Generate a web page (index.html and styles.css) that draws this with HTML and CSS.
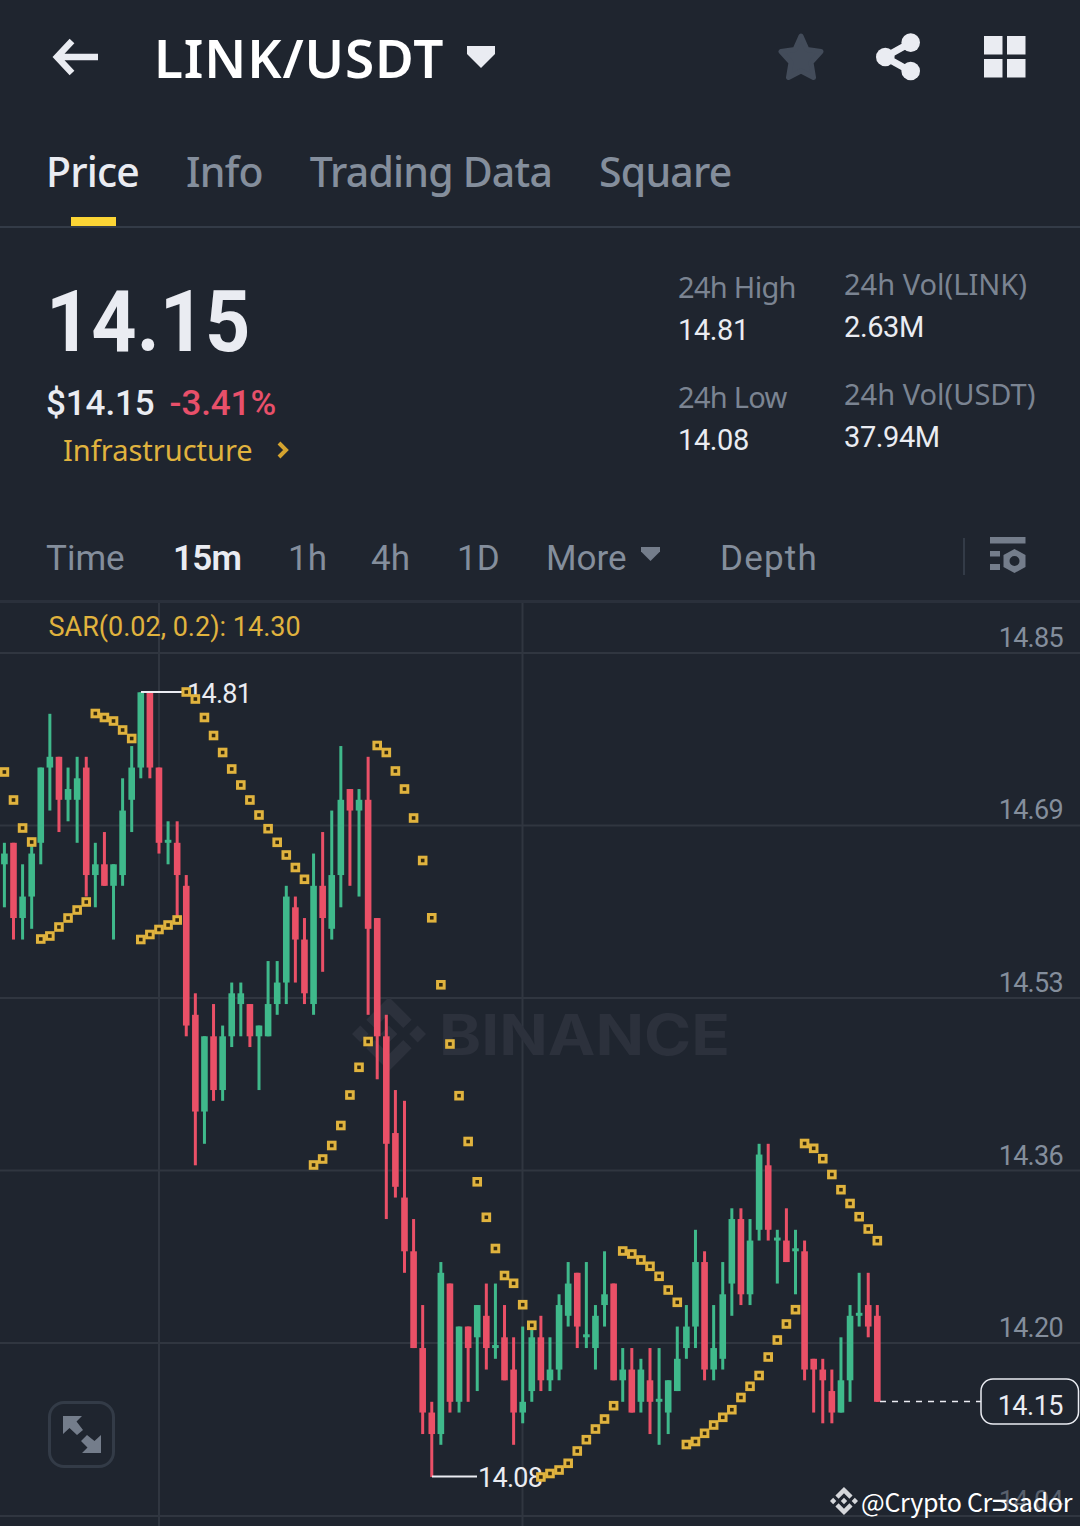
FILE: index.html
```html
<!DOCTYPE html>
<html lang="en">

<head>
    <meta charset="UTF-8">
    <meta name="viewport" content="width=device-width, initial-scale=1.0">
    <title>LINK/USDT</title>
    <link rel="stylesheet" href="styles.css">
</head>

<body>
    <header class="header">
        <svg class="back" width="46" height="38" viewBox="0 0 46 38">
            <path d="M20 3L5 19L20 35M5 19H46" />
        </svg>
        <h1 class="pair">LINK/USDT</h1>
        <svg class="pair-caret" width="28" height="22" viewBox="0 0 28 22">
            <path d="M0 0H28V8L14 22L0 8Z" />
        </svg>
        <div class="actions">
            <svg class="star" width="46" height="48" viewBox="0 0 46 48">
                <path d="M23 3L29 16.500L43 18.500L33 29.500L35.500 44.500L23 38L10.500 44.500L13 29.500L3 18.500L17 16.500Z" />
            </svg>
            <svg class="share" width="44" height="48" viewBox="0 0 44 48">
                <path d="M35 9.500L9 24L35 38.500" />
                <circle cx="9.300" cy="24" r="9.300" />
                <circle cx="34.700" cy="9.600" r="9.300" />
                <circle cx="34.700" cy="38" r="9.300" />
            </svg>
            <svg class="grid-icon" width="42" height="42" viewBox="0 0 42 42">
                <path d="M0 0H18.500V18.500H0ZM23 0H41.500V18.500H23ZM0 23H18.500V41.500H0ZM23 23H41.500V41.500H23Z" />
            </svg>
        </div>
    </header>

    <nav class="tabs">
        <a class="tab active">Price</a>
        <a class="tab">Info</a>
        <a class="tab">Trading Data</a>
        <a class="tab">Square</a>
    </nav>

    <section class="ticker">
        <div class="price-box">
            <div class="price">14.15</div>
            <div class="sub-price">
                <span>$14.15</span>
                <span class="change">-3.41%</span>
            </div>
            <div class="category">
                <span>Infrastructure</span>
                <svg width="12" height="18" viewBox="0 0 12 18">
                    <path d="M2 2L9 9L2 16" />
                </svg>
            </div>
        </div>
        <div class="stats">
            <div class="stat-col range">
                <div class="label">24h High</div>
                <div class="value">14.81</div>
                <div class="label">24h Low</div>
                <div class="value">14.08</div>
            </div>
            <div class="stat-col volume">
                <div class="label">24h Vol(LINK)</div>
                <div class="value">2.63M</div>
                <div class="label">24h Vol(USDT)</div>
                <div class="value">37.94M</div>
            </div>
        </div>
    </section>

    <div class="intervals">
        <span class="time">Time</span>
        <span class="m15 selected">15m</span>
        <span class="h1">1h</span>
        <span class="h4">4h</span>
        <span class="d1">1D</span>
        <span class="more">More</span>
        <svg class="more-caret" width="19" height="14" viewBox="0 0 19 14">
            <path d="M0 0H19V4.500L9.500 14L0 4.500Z" />
        </svg>
        <span class="depth">Depth</span>
        <svg class="settings" width="36" height="36" viewBox="0 0 36 36">
            <path fill-rule="evenodd" d="M0 0H35.500V6.500H0ZM0 14H10V19.500H0ZM0 27H10V33H0ZM24.500 12L35.500 18V30L24.500 36L13.500 30V18ZM24.500 19A5 5 0 1 0 24.500 29A5 5 0 1 0 24.500 19Z" />
        </svg>
    </div>

    <main class="chart">
        <svg id="chart" width="1080" height="926" viewBox="0 600 1080 926">
            <defs>
                <symbol id="logo" viewBox="0 0 24 24">
                    <path d="M16.624 13.9202l2.7175 2.7154-7.353 7.353-7.353-7.352 2.7175-2.7164 4.6355 4.6595 4.6356-4.6595zm4.6366-4.6366L24 12l-2.7154 2.7164L18.5682 12l2.6924-2.7164zm-9.272.001l2.7163 2.6914-2.7164 2.7174v-.001L9.2721 12l2.7164-2.7154zm-9.2722-.001L5.4088 12l-2.6914 2.6924L0 12l2.7164-2.7164zM11.9885.0115l7.353 7.329-2.7174 2.7154-4.6356-4.6356-4.6355 4.6595-2.7174-2.7154 7.353-7.353z" />
                </symbol>
            </defs>
            <path class="top-line" d="M0 601.500H1080" />
            <path class="lines" d="M0 653H1080M0 825.500H1080M0 998H1080M0 1170.500H1080M0 1343H1080M0 1516H1080M159 603V1526M522.500 603V1526" />
            <g class="watermark">
                <use href="#logo" x="352" y="997" width="74" height="74" />
                <text x="439" y="1055" textLength="291" lengthAdjust="spacingAndGlyphs">BINANCE</text>
            </g>
            <g class="axis">
                <text x="1063" y="647">14.85</text>
                <text x="1063" y="819">14.69</text>
                <text x="1063" y="992">14.53</text>
                <text x="1063" y="1165">14.36</text>
                <text x="1063" y="1337">14.20</text>
                <text class="faded" x="1063" y="1510">14.04</text>
            </g>
            <text class="sar-label" x="48.500" y="636">SAR(0.02, 0.2): 14.30</text>
            <g id="candles"></g>
            <path class="pointer" d="M141 692H188M432 1476.500H477" />
            <text class="extreme" x="187" y="703">14.81</text>
            <text class="extreme" x="478" y="1487">14.08</text>
            <g id="sar"></g>
            <path class="last-line" d="M880 1401.500H981" />
            <rect class="last-box" x="981" y="1379" width="97.500" height="45" rx="12" />
            <text class="last-text" x="1063" y="1415">14.15</text>
        </svg>
        <button type="button" class="fullscreen">
            <svg width="40" height="40" viewBox="0 0 40 40">
                <path d="M1 1H20L14.500 6.500L21 15L15 20L7.500 13L1 19ZM39 38H20L25.500 32.500L19 26L25 20L32.500 26L39 20Z" />
            </svg>
        </button>
        <div class="credit">
            <svg width="28" height="28"><use href="#logo" /></svg>
            <span>@Crypto Crᴝsador</span>
        </div>
    </main>
    <script src="chart.js"></script>
</body>

</html>
```
FILE: styles.css
```css
* {
    box-sizing: border-box;
}

body {
    margin: 0;
    width: 1080px;
    height: 1526px;
    overflow: hidden;
    background-color: #1f252f;
    color: #eaecf2;
    font-family: "Noto Sans", sans-serif;
}

svg {
    display: block;
    flex: none;
}

.header {
    display: flex;
    align-items: center;
    height: 113px;
    padding: 0 54px 0 52px;
}

.back {
    fill: none;
    stroke: #eaecf2;
    stroke-width: 6.5;
}

.pair {
    margin: 3px 0 0 56px;
    width: 292px;
    font-size: 53px;
    font-weight: 600;
    line-height: 60px;
    letter-spacing: 0.9px;
    color: white;
    white-space: nowrap;
}

.pair-caret {
    margin-left: 21px;
    fill: #eaecf2;
}

.actions {
    display: flex;
    align-items: center;
    margin-left: auto;
}

.star {
    fill: #434c5a;
    stroke: #434c5a;
    stroke-width: 5;
    stroke-linejoin: round;
}

.share {
    margin-left: 52px;
    fill: #eaecf2;
}

.share path {
    fill: none;
    stroke: #eaecf2;
    stroke-width: 7;
}

.grid-icon {
    margin-left: 64px;
    fill: #eaecf2;
}

.tabs {
    display: flex;
    gap: 47px;
    height: 115px;
    padding: 28px 46px 0;
    border-bottom: 2px solid #333b47;
    font-size: 41px;
    font-weight: 500;
    line-height: 60px;
    color: #848e9c;
}

.tab {
    position: relative;
    letter-spacing: -0.8px;
}

.active {
    color: #eaecf2;
}

.active::after {
    content: "";
    position: absolute;
    left: 25px;
    bottom: 0;
    width: 45px;
    height: 9px;
    background-color: #fcd535;
}

.ticker {
    display: flex;
    justify-content: space-between;
    height: 290px;
    padding: 40px 0 0 46px;
}

.price-box {
    padding-top: 9px;
    font-family: Roboto, sans-serif;
}

.price {
    font-size: 85px;
    font-weight: 700;
    line-height: 90px;
    transform: scaleX(0.93);
    transform-origin: left;
}

.sub-price {
    display: flex;
    gap: 15px;
    font-size: 35px;
    font-weight: 500;
    line-height: 50px;
    letter-spacing: -0.1px;
    padding-top: 12px;
}

.change {
    color: #e8506a;
}

.category {
    display: flex;
    align-items: center;
    gap: 24px;
    padding-left: 17px;
    font-family: "Noto Sans", sans-serif;
    font-size: 29px;
    line-height: 42px;
    color: #e0b33e;
}

.category path {
    fill: none;
    stroke: #d5a42f;
    stroke-width: 4;
}

.stats {
    display: flex;
    width: 402px;
}

.stat-col {
    width: 166px;
    padding-top: 3px;
}

.range .label {
    letter-spacing: -0.7px;
}

.volume {
    width: 236px;
    padding-top: 0;
}

.label {
    font-size: 29px;
    line-height: 32px;
    color: #7b8492;
    white-space: nowrap;
}

.value {
    margin: 4px 0 31px;
    padding-top: 3px;
    font-family: Roboto, sans-serif;
    font-size: 29px;
    line-height: 40px;
    letter-spacing: -0.4px;
}

.intervals {
    display: grid;
    grid-template-columns: 127px 115px 83px 86px 89px 95px 79px 245px 25px 36px;
    align-items: center;
    height: 82px;
    padding: 0 0 1px 46px;
    font-family: Roboto, sans-serif;
    font-size: 35px;
    color: #848e9c;
}

.selected {
    color: #eaecf2;
    font-weight: 600;
    letter-spacing: -0.8px;
}

.more-caret {
    margin-top: -9px;
    fill: #747d8b;
}

.depth {
    height: 37px;
    line-height: 41px;
    margin-top: -5px;
    border-right: 2px solid #333b47;
    letter-spacing: 1.2px;
}

.settings {
    grid-column: 10;
    margin-top: -7px;
    fill: #747d8b;
}

.chart {
    position: relative;
    height: 926px;
    font-family: Roboto, sans-serif;
    font-size: 27px;
}

.top-line {
    stroke: #2a303b;
    stroke-width: 3;
}

.lines {
    stroke: #303640;
    stroke-width: 2;
}

.watermark {
    fill: #2c313c;
    font-family: Inter, sans-serif;
    font-size: 56px;
    font-weight: 700;
}

.axis {
    fill: #848e9c;
    text-anchor: end;
    letter-spacing: -0.7px;
}

.faded {
    fill: #58606d;
}

.sar-label {
    fill: #e0b33e;
}

.up {
    fill: #3fb98b;
}

.down {
    fill: #ea5067;
}

.sar-mark {
    fill: #33290f;
    stroke: #e0b33e;
    stroke-width: 3;
}

.pointer {
    stroke: #eaecf2;
    stroke-width: 2;
}

.extreme {
    fill: #eaecf2;
    letter-spacing: -0.7px;
}

.last-line {
    stroke: #eaecf2;
    stroke-width: 1.5;
    stroke-dasharray: 6;
}

.last-box {
    fill: #1f252f;
    stroke: #eaecf2;
    stroke-width: 1.5;
}

.last-text {
    fill: #eaecf2;
    text-anchor: end;
    letter-spacing: -0.5px;
}

.fullscreen {
    position: absolute;
    left: 48px;
    top: 801px;
    width: 67px;
    height: 67px;
    padding: 11px;
    border: 3px solid #333b47;
    border-radius: 16px;
    background: none;
    fill: #747d8b;
}

.credit {
    position: absolute;
    left: 830px;
    top: 881px;
    display: flex;
    align-items: center;
    gap: 3px;
    font-family: "Noto Sans CJK SC", "Noto Sans", sans-serif;
    font-size: 25px;
    line-height: 40px;
    letter-spacing: -0.25px;
    color: white;
    white-space: nowrap;
}

.credit svg {
    fill: #d5d7db;
}
```
FILE: chart.js
```js
// [direction, high, body top, body bottom, low] in 0.01 ticks below 14.81
const candles = [
    ['up', 14, 15, 16, 20], ['down', 14, 14, 21, 23], ['up', 16, 19, 21, 23], ['up', 14, 15, 19, 22],
    ['up', 7, 7, 14, 16], ['up', 2, 6, 7, 11], ['down', 6, 6, 10, 13], ['up', 7, 9, 10, 12],
    ['up', 6, 8, 10, 14], ['down', 6, 7, 17, 19], ['up', 14, 16, 17, 20], ['down', 13, 16, 18, 18],
    ['up', 16, 16, 18, 23], ['up', 8, 11, 17, 18], ['up', 5, 7, 10, 13], ['up', 0, 0, 7, 8],
    ['down', 0, 0, 7, 8], ['down', 7, 7, 14, 15], ['up', 12, 14, 14, 16], ['down', 12, 14, 17, 21],
    ['down', 17, 18, 31, 32], ['down', 28, 30, 39, 44], ['up', 32, 32, 39, 42], ['down', 29, 32, 37, 38],
    ['up', 31, 32, 37, 38], ['up', 27, 28, 32, 33], ['up', 27, 28, 29, 32], ['down', 29, 29, 32, 33],
    ['up', 31, 31, 32, 37], ['up', 25, 29, 32, 32], ['up', 25, 27, 29, 30], ['up', 18, 19, 27, 29],
    ['down', 19, 20, 23, 27], ['down', 21, 23, 28, 29], ['up', 15, 18, 29, 30], ['down', 13, 18, 21, 26],
    ['up', 11, 17, 22, 23], ['up', 5, 10, 17, 20], ['down', 9, 9, 11, 18], ['up', 9, 10, 11, 19],
    ['down', 6, 10, 22, 30], ['down', 21, 21, 32, 36], ['down', 30, 32, 42, 49], ['down', 37, 41, 46, 47],
    ['down', 38, 47, 52, 54], ['down', 49, 52, 61, 61], ['down', 57, 61, 67, 69], ['down', 66, 67, 69, 73],
    ['up', 53, 54, 69, 70], ['down', 55, 55, 66, 67], ['up', 59, 59, 66, 67], ['down', 59, 59, 61, 66],
    ['up', 57, 57, 60, 65], ['down', 55, 58, 61, 63], ['up', 55, 61, 61, 62], ['down', 57, 60, 64, 64],
    ['down', 60, 63, 67, 70], ['up', 59, 66, 67, 68], ['up', 59, 60, 65, 66], ['down', 58, 60, 64, 65],
    ['up', 60, 63, 64, 65], ['up', 56, 57, 63, 64], ['up', 53, 55, 58, 59], ['down', 54, 54, 59, 61],
    ['up', 53, 60, 60, 61], ['up', 57, 58, 61, 63], ['up', 52, 56, 57, 59], ['down', 55, 55, 64, 64],
    ['up', 61, 63, 64, 66], ['down', 61, 63, 67, 67], ['up', 62, 63, 66, 67], ['down', 61, 64, 66, 69],
    ['up', 61, 66, 66, 70], ['up', 64, 64, 67, 69], ['up', 59, 62, 65, 65], ['up', 57, 59, 61, 62],
    ['up', 50, 53, 59, 61], ['down', 52, 53, 63, 64], ['up', 57, 61, 63, 64], ['up', 53, 56, 62, 63],
    ['up', 48, 49, 55, 58], ['down', 48, 49, 56, 57], ['up', 49, 51, 56, 57], ['up', 42, 43, 50, 51],
    ['down', 42, 44, 50, 51], ['up', 50, 51, 51, 55], ['down', 48, 51, 53, 53], ['up', 50, 52, 52, 56],
    ['down', 51, 52, 63, 64], ['down', 62, 62, 63, 67], ['down', 62, 63, 64, 68], ['down', 63, 65, 67, 68],
    ['up', 60, 64, 67, 67], ['up', 57, 58, 64, 66], ['up', 54, 58, 58, 59], ['down', 54, 57, 59, 60],
    ['down', 57, 58, 66, 66]
];

// one SAR mark for each candle
const sar = [
    772, 800, 828, 842, 939, 936, 927, 918, 910, 902, 713.5, 717.5, 721, 730, 738.5,
    939.5, 934.5, 929.5, 925, 920, 692, 699, 717.5, 735.5, 752.5, 769, 785, 800, 815,
    828.7, 842.3, 855, 867.5, 879.3, 1165, 1159, 1145.5, 1125.5, 1095, 1067.3, 1041.5,
    745.5, 752.5, 771, 789, 818, 860.5, 917.8, 984.8, 1044, 1095.7, 1141.5, 1181.8,
    1217.3, 1248.5, 1275.5, 1283.3, 1304.7, 1325.3, 1477, 1473.5, 1470, 1463.3, 1451,
    1439.7, 1429, 1419, 1405.7, 1251, 1254, 1260, 1266.3, 1276.3, 1290, 1302.3,
    1444.5, 1441.5, 1433.3, 1425, 1417.3, 1409.7, 1397.5, 1386.3, 1375.5, 1357, 1340,
    1324, 1309.7, 1143.5, 1148.3, 1158.7, 1174.5, 1189.7, 1203.5, 1216.7, 1229, 1240.7
];

const candleGroup = document.getElementById('candles');
const sarGroup = document.getElementById('sar');

function addRect(parent, cls, x, y, width, height) {
    const rect = document.createElementNS('http://www.w3.org/2000/svg', 'rect');
    rect.setAttribute('class', cls);
    rect.setAttribute('x', x - width / 2);
    rect.setAttribute('y', y);
    rect.setAttribute('width', width);
    rect.setAttribute('height', height);
    parent.appendChild(rect);
}

function tickY(tick) {
    return 692.3 + tick * 10.75;
}

candles.forEach(([dir, high, top, bottom, low], i) => {
    const x = 4.4 + i * 9.093;
    addRect(candleGroup, dir, x, tickY(high), 3, tickY(low) - tickY(high));
    if (top === bottom) {
        addRect(candleGroup, dir, x, tickY(top) - 3, 6.6, 3);
    } else {
        addRect(candleGroup, dir, x, tickY(top), 6.6, tickY(bottom) - tickY(top));
    }
    addRect(sarGroup, 'sar-mark', x, sar[i] - 3.3, 6.6, 6.6);
});
```
